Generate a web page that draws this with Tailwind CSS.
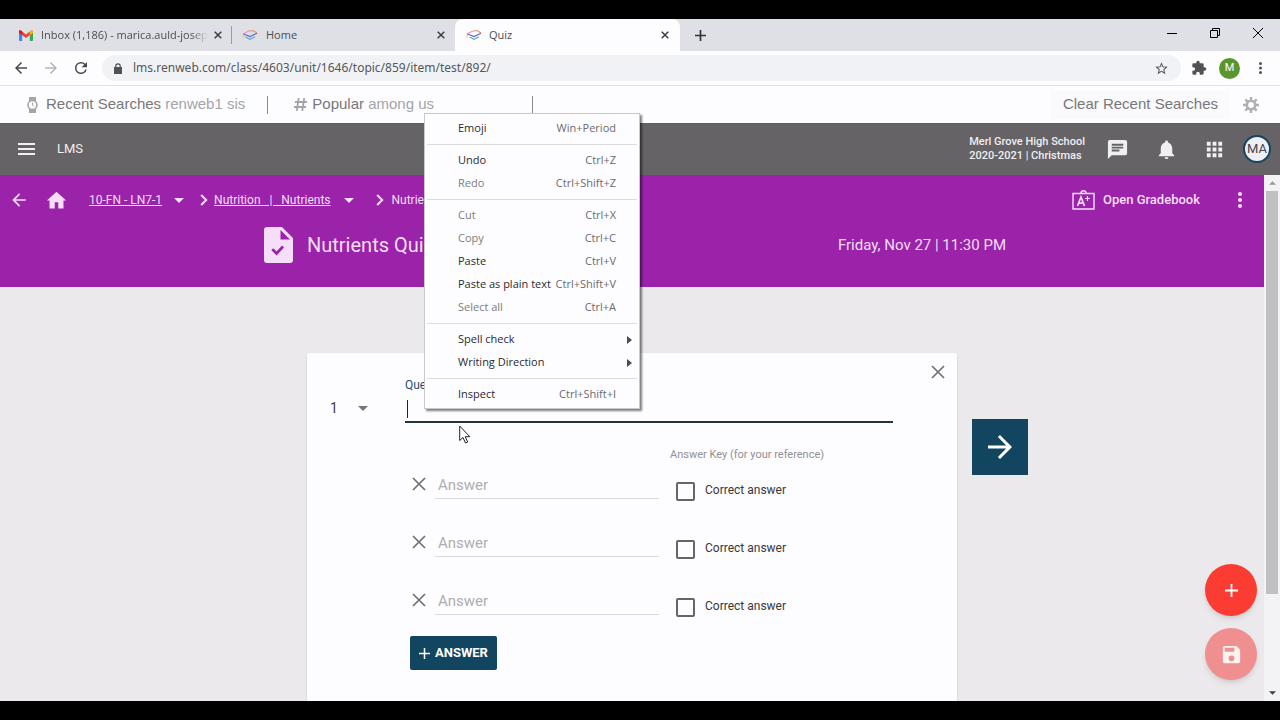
<!DOCTYPE html>
<html lang="en">
<head>
  <meta charset="UTF-8" />
  <meta name="viewport" content="width=device-width, initial-scale=1.0" />
  <title>Quiz</title>
  <script src="https://cdn.jsdelivr.net/npm/@tailwindcss/browser@4"></script>
</head>
<body class="relative flex h-screen flex-col overflow-hidden bg-black py-[19px] font-['Roboto',sans-serif]">

  <!-- shared icons -->
  <svg class="hidden">
    <symbol id="close" viewBox="0 0 14 14"><path d="M1 1l12 12M13 1L1 13" fill="none" stroke="currentColor" stroke-width="1.7" /></symbol>
    <symbol id="tab-close" viewBox="0 0 8 8"><path d="M.7.7l6.6 6.6M7.3.7L.7 7.3" fill="none" stroke="currentColor" stroke-width="1.5" /></symbol>
    <symbol id="caret" viewBox="0 0 10 5"><path d="M0 0h10L5 5z" fill="currentColor" /></symbol>
    <symbol id="chevron" viewBox="0 0 8 12"><path d="M1.2 1l5 5-5 5" fill="none" stroke="currentColor" stroke-width="2" /></symbol>
    <symbol id="arrow" viewBox="0 0 24 24"><path d="M20 11H7.83l5.59-5.59L12 4l-8 8 8 8 1.41-1.41L7.83 13H20z" fill="currentColor" /></symbol>
    <symbol id="dots" viewBox="0 0 4 16"><circle cx="2" cy="2" r="2" fill="currentColor" /><circle cx="2" cy="8" r="2" fill="currentColor" /><circle cx="2" cy="14" r="2" fill="currentColor" /></symbol>
    <symbol id="layers" viewBox="0 0 16 12">
      <path d="M1.2 5v4" fill="none" stroke="#f2cf52" stroke-width="1.2" />
      <path d="M3.500 8l4.500 2.300 5-2.500" fill="none" stroke="#5fa8dc" stroke-width="1.2" />
      <path d="M1 4.800L7 2" fill="none" stroke="#e79bb4" stroke-width="1.2" />
      <path d="M7 2l4-.5 4 2.500" fill="none" stroke="#e8926a" stroke-width="1.2" />
      <path d="M1.500 5L8 7.500l7-3.300" fill="none" stroke="#6c62cc" stroke-width="1.2" />
    </symbol>
  </svg>

  <!-- tab strip -->
  <div class="flex h-8 shrink-0 items-stretch bg-[#dee0e5] font-['Open_Sans',sans-serif] text-[11px] text-[#4b4d52]">
    <div class="flex w-[231px] items-center pr-[9px] pl-[19px]">
      <svg class="h-[11px] w-[14px] shrink-0" viewBox="0 0 14 11">
        <path d="M0 1.5V10q0 1 1 1h2.2V4z" fill="#4285f4" />
        <path d="M14 1.5V10q0 1-1 1h-2.2V4z" fill="#34a853" />
        <path d="M0 1.6Q0 0 1.6.3L7 4.4 12.4.3Q14 0 14 1.6V2.8L7 8 0 2.8z" fill="#ea4335" />
        <path d="M10.8 1.5l1.6-1.2Q14 0 14 1.6V2.8l-3.2 2.4z" fill="#fbbc04" />
        <path d="M0 1.6Q0 0 1.6.3l1.6 1.2v3.7L0 2.8z" fill="#c5221f" />
      </svg>
      <span class="ml-2 mask-r-from-90% whitespace-nowrap">Inbox (1,186) - marica.auld-josep</span>
      <button aria-label="Close tab" class="ml-auto"><svg class="size-2 text-[#3c3e43]"><use href="#tab-close" /></svg></button>
    </div>
    <span class="my-[7px] w-px bg-[#9b9da2]"></span>
    <div class="flex w-[223px] items-center pr-[10px] pl-[10px]">
      <svg class="h-3 w-4"><use href="#layers" /></svg>
      <span class="ml-2">Home</span>
      <button aria-label="Close tab" class="ml-auto"><svg class="size-2 text-[#3c3e43]"><use href="#tab-close" /></svg></button>
    </div>
    <div class="flex w-[225px] items-center rounded-t-lg bg-[#fdfcfe] pr-[11px] pl-[11px]">
      <svg class="h-3 w-4"><use href="#layers" /></svg>
      <span class="ml-[7px]">Quiz</span>
      <button aria-label="Close tab" class="ml-auto"><svg class="size-2 text-[#3c3e43]"><use href="#tab-close" /></svg></button>
    </div>
    <button aria-label="New tab" class="ml-[15px]"><svg class="size-[11px] text-[#303236]" viewBox="0 0 11 11"><path d="M5.5 0v11M0 5.5h11" stroke="currentColor" stroke-width="1.7" /></svg></button>
    <div class="mb-1 ml-auto flex items-center gap-[33px] pr-[17px] text-black">
      <button aria-label="Minimize"><svg class="size-[10px]" viewBox="0 0 10 10"><path d="M0 5.5h10" stroke="currentColor" /></svg></button>
      <button aria-label="Restore"><svg class="size-[10px]" viewBox="0 0 10 10"><path d="M.5 2.5h7v7h-7zM2.5 2.5v-2h7v7h-2" fill="none" stroke="currentColor" /></svg></button>
      <button aria-label="Close window"><svg class="size-[10px]" viewBox="0 0 10 10"><path d="M0 0l10 10M10 0L0 10" stroke="currentColor" /></svg></button>
    </div>
  </div>

  <!-- address bar -->
  <div class="flex h-[35px] shrink-0 items-center border-b border-[#e2e2e5] bg-[#fdfcfe] pr-[18px] pl-3 text-[#505256]">
    <button aria-label="Back"><svg class="size-[18px] text-[#47494d]"><use href="#arrow" /></svg></button>
    <button aria-label="Forward" class="ml-3"><svg class="size-[18px] rotate-180 text-[#b5b6b9]"><use href="#arrow" /></svg></button>
    <button aria-label="Reload" class="ml-3"><svg class="size-[18px] text-[#47494d]" viewBox="0 0 24 24"><path fill="currentColor" d="M17.65 6.35A7.96 7.96 0 0 0 12 4a8 8 0 1 0 7.73 10h-2.08A6 6 0 1 1 12 6c1.66 0 3.14.69 4.22 1.78L13 11h7V4z" /></svg></button>
    <div class="ml-3 flex h-[26px] grow items-center rounded-full bg-[#f1f2f5] pr-3 pl-3">
      <svg class="h-[11px] w-2" viewBox="0 0 8 11"><path d="M0 4h8v7H0z" fill="currentColor" /><path d="M1.8 4.5V3a2.2 2.2 0 0 1 4.4 0v1.5" fill="none" stroke="currentColor" stroke-width="1.2" /></svg>
      <input type="text" aria-label="Address" value="lms.renweb.com/class/4603/unit/1646/topic/859/item/test/892/" class="ml-[11px] grow bg-transparent font-['Noto_Sans',sans-serif] text-xs text-[#55575b] outline-none" />
      <button aria-label="Bookmark"><svg class="size-[15px]" viewBox="0 0 24 24"><path fill="currentColor" d="M22 9.24l-7.19-.62L12 2 9.19 8.63 2 9.24l5.46 4.73L5.82 21 12 17.27 18.18 21l-1.63-7.03zM12 15.4l-3.76 2.27 1-4.28-3.32-2.88 4.38-.38L12 6.1l1.71 4.04 4.38.38-3.32 2.88 1 4.28z" /></svg></button>
    </div>
    <button aria-label="Extensions" class="ml-[10px]"><svg class="size-4" viewBox="0 0 24 24"><path fill="currentColor" d="M20.5 11H19V7a2 2 0 0 0-2-2h-4V3.500a2.500 2.500 0 0 0-5 0V5H4a2 2 0 0 0-2 2v3.800h1.500a2.700 2.700 0 0 1 0 5.400H2V20a2 2 0 0 0 2 2h3.800v-1.500a2.700 2.700 0 0 1 5.400 0V22H17a2 2 0 0 0 2-2v-4h1.500a2.500 2.500 0 0 0 0-5z" /></svg></button>
    <button class="ml-3 size-[21px] rounded-full bg-[#5a962d] text-[11px] text-white">M</button>
    <button aria-label="Browser menu" class="ml-[19px]"><svg class="h-3 w-[3px]"><use href="#dots" /></svg></button>
  </div>

  <!-- recent searches -->
  <div class="flex h-[37px] shrink-0 items-center bg-[#fdfcfe] pr-[21px] pl-[27px] font-['Liberation_Sans',sans-serif] text-[15px] text-[#a5a5a8]">
    <svg class="h-4 w-[11px]" viewBox="0 0 11 16"><path d="M2 0h7v4.500H2zM2 11.500h7V16H2z" fill="currentColor" /><circle cx="5.500" cy="8" r="4.500" fill="#fdfcfe" stroke="currentColor" stroke-width="1.600" /><path d="M5.500 5.500V8l1.500 1.500" fill="none" stroke="currentColor" /></svg>
    <p class="ml-2"><span class="text-[#78787b]">Recent Searches</span> renweb1 sis</p>
    <span class="ml-[22px] h-[18px] w-px bg-[#8b8b8e]"></span>
    <svg class="ml-[26px] size-[13px]" viewBox="0 0 13 13"><path d="M4.700 0L2.800 13M10.200 0L8.300 13M1 4h12M0 9h12" stroke="currentColor" stroke-width="1.800" /></svg>
    <p class="ml-[5px]"><span class="text-[#78787b]">Popular</span> among us</p>
    <span class="ml-[98px] h-[18px] w-px bg-[#8b8b8e]"></span>
    <button class="ml-auto h-7 bg-[#faf9fb] px-3 text-[#78787b]">Clear Recent Searches</button>
    <button aria-label="Settings" class="ml-[13px]"><svg class="size-4" viewBox="0 0 16 16"><circle cx="8" cy="8" r="4.200" fill="none" stroke="#b0b0b3" stroke-width="2.600" /><path d="M8 0v3.500M8 12.500V16M0 8h3.500M12.500 8H16M2.300 2.300l2.500 2.500M11.200 11.200l2.500 2.500M2.300 13.700l2.500-2.500M11.200 4.800l2.500-2.500" stroke="#b0b0b3" stroke-width="2.400" /></svg></button>
  </div>

  <!-- app header -->
  <header class="flex h-[52px] shrink-0 items-center bg-[#656365] pr-[9px] pl-[18px] text-[#f0eff1] inset-shadow-xs">
    <button aria-label="Menu"><svg class="h-3 w-[17px]" viewBox="0 0 17 12"><path d="M0 1h17M0 6h17M0 11h17" stroke="currentColor" stroke-width="2" /></svg></button>
    <span class="ml-[22px] text-[13px]">LMS</span>
    <p class="ml-auto text-[11px] leading-[14px] font-medium">Merl Grove High School<br />2020-2021 | Christmas</p>
    <button aria-label="Messages" class="ml-[21px]"><svg class="size-[23px]" viewBox="0 0 24 24"><path fill="currentColor" d="M20 2H4a2 2 0 0 0-2 2v18l4-4h14a2 2 0 0 0 2-2V4a2 2 0 0 0-2-2zM6 9h12v2H6zm8 5H6v-2h8zm4-6H6V6h12z" /></svg></button>
    <button aria-label="Notifications" class="ml-[26px]"><svg class="size-[23px]" viewBox="0 0 24 24"><path fill="currentColor" d="M12 22a2 2 0 0 0 2-2h-4a2 2 0 0 0 2 2zm6-6v-5c0-3.070-1.640-5.640-4.500-6.320V4a1.500 1.500 0 0 0-3 0v.68C7.630 5.360 6 7.920 6 11v5l-2 2v1h16v-1z" /></svg></button>
    <button aria-label="Apps" class="ml-[25px]"><svg class="size-[23px]" viewBox="0 0 24 24"><path fill="currentColor" d="M4 8h4V4H4zm6 12h4v-4h-4zm-6 0h4v-4H4zm0-6h4v-4H4zm6 0h4v-4h-4zm6-10v4h4V4zm-6 4h4V4h-4zm6 6h4v-4h-4zm0 6h4v-4h-4z" /></svg></button>
    <button class="ml-[17px] size-7 rounded-full border-2 border-[#16455f] bg-[#efeef3] text-[13px] text-[#44454b]">MA</button>
  </header>

  <div class="flex min-h-0 grow">
    <main class="relative min-w-0 grow overflow-hidden bg-[#ebe9eb]">
      <div class="h-28 bg-[#9a23aa] text-[#f6def8]">
        <nav class="flex h-[50px] items-center pr-[22px] pl-[9px] text-xs whitespace-nowrap">
          <button aria-label="Back"><svg class="size-5"><use href="#arrow" /></svg></button>
          <a href="#" aria-label="Home" class="ml-[17px]"><svg class="size-[21px]" viewBox="0 0 24 24"><path fill="currentColor" d="M10 21v-7h4v7h6v-9h3L12 2 1 12h3v9z" /></svg></a>
          <a href="#" class="ml-[22px] underline">10-FN - LN7-1</a>
          <button aria-label="Choose class" class="ml-3"><svg class="h-[5px] w-[10px]"><use href="#caret" /></svg></button>
          <svg class="ml-4 h-3 w-2"><use href="#chevron" /></svg>
          <a href="#" class="ml-[6px] whitespace-pre underline">Nutrition   |   Nutrients</a>
          <button aria-label="Choose topic" class="ml-[13px]"><svg class="h-[5px] w-[10px]"><use href="#caret" /></svg></button>
          <svg class="ml-[22px] h-3 w-2"><use href="#chevron" /></svg>
          <span class="ml-2">Nutrients Quiz</span>
          <a href="#" class="ml-auto flex items-center text-[13px] font-medium">
            <svg class="mr-2 h-5 w-[23px]" viewBox="0 0 23 20"><path d="M1 3.500h21v15.500H1zM9 3a2.500 2.200 0 0 1 5 0" fill="none" stroke="currentColor" stroke-width="1.400" /><path d="M5.500 16L9 7l3.500 9M6.700 13.200h4.600" fill="none" stroke="currentColor" stroke-width="1.700" /><path d="M15.500 6v5M13 8.500h5" stroke="currentColor" stroke-width="1.200" /></svg>
            Open Gradebook
          </a>
          <button aria-label="More" class="ml-[38px]"><svg class="h-4 w-1"><use href="#dots" /></svg></button>
        </nav>
        <div class="mx-auto flex h-10 max-w-[748px] items-center pl-[6px]">
          <svg class="h-9 w-[29px]" viewBox="0 0 29 36"><path fill="currentColor" fill-rule="evenodd" d="M3 0h15l11 11v22a3 3 0 0 1-3 3H3a3 3 0 0 1-3-3V3a3 3 0 0 1 3-3zm13.500 3v9.500H26zM7.300 23l5.200 5.500 7.500-8-2-2-5.500 6-3.200-3.300z" /></svg>
          <h1 class="ml-[14px] text-xl">Nutrients Quiz</h1>
          <p class="ml-auto text-[15px]">Friday, Nov 27 | 11:30 PM</p>
        </div>
      </div>

      <div class="grid grid-cols-[1fr_650px_1fr] pt-[66px]">
        <div></div>
        <section class="h-[400px] rounded-xs bg-[#fdfcfe] shadow">
          <div class="flex pt-[11px] pl-[23px]">
            <div class="relative mt-9 h-4 w-[75px]">
              <select aria-label="Points" class="block w-10 appearance-none text-sm leading-4 text-[#3f3f42]"><option>1</option></select>
              <svg class="pointer-events-none absolute top-[6px] left-7 h-[5px] w-[10px] text-[#77777a]"><use href="#caret" /></svg>
            </div>
            <div class="relative mt-[13px] w-[488px]">
              <label for="question" class="block text-xs leading-4 text-[#2b5069]">Question</label>
              <input id="question" type="text" class="block h-[30px] w-full border-b-2 border-[#1f3542] outline-none" />
              <span class="absolute top-[23px] left-[2px] h-[18px] w-px bg-[#222]"></span>
            </div>
            <button aria-label="Delete question" class="ml-[38px] h-4 text-[#717174]"><svg class="size-[14px]"><use href="#close" /></svg></button>
          </div>

          <div class="mt-[24px] pl-[363px] text-[11px] leading-4 text-[#919194]">Answer Key (for your reference)</div>

          <div class="flex flex-col gap-[30px] pt-2 pl-[105px]">
            <div class="flex h-7 items-start">
              <button aria-label="Remove answer 1" class="mt-[6px] text-[#717174]"><svg class="size-[14px]"><use href="#close" /></svg></button>
              <input type="text" aria-label="Answer 1" placeholder="Answer" class="ml-[9px] h-7 w-56 border-b border-[#dadadd] px-[3px] pt-px text-[15px] text-[#444] outline-none placeholder:text-[#aeaeb1]" />
              <input id="correct1" type="checkbox" class="mt-[11px] ml-[17px] size-[19px] appearance-none rounded-xs border-2 border-[#666669] checked:bg-[#12455f]" />
              <label for="correct1" class="mt-[11px] ml-[10px] text-xs leading-4 text-[#38383b]">Correct answer</label>
            </div>
            <div class="flex h-7 items-start">
              <button aria-label="Remove answer 2" class="mt-[6px] text-[#717174]"><svg class="size-[14px]"><use href="#close" /></svg></button>
              <input type="text" aria-label="Answer 2" placeholder="Answer" class="ml-[9px] h-7 w-56 border-b border-[#dadadd] px-[3px] pt-px text-[15px] text-[#444] outline-none placeholder:text-[#aeaeb1]" />
              <input id="correct2" type="checkbox" class="mt-[11px] ml-[17px] size-[19px] appearance-none rounded-xs border-2 border-[#666669] checked:bg-[#12455f]" />
              <label for="correct2" class="mt-[11px] ml-[10px] text-xs leading-4 text-[#38383b]">Correct answer</label>
            </div>
            <div class="flex h-7 items-start">
              <button aria-label="Remove answer 3" class="mt-[6px] text-[#717174]"><svg class="size-[14px]"><use href="#close" /></svg></button>
              <input type="text" aria-label="Answer 3" placeholder="Answer" class="ml-[9px] h-7 w-56 border-b border-[#dadadd] px-[3px] pt-px text-[15px] text-[#444] outline-none placeholder:text-[#aeaeb1]" />
              <input id="correct3" type="checkbox" class="mt-[11px] ml-[17px] size-[19px] appearance-none rounded-xs border-2 border-[#666669] checked:bg-[#12455f]" />
              <label for="correct3" class="mt-[11px] ml-[10px] text-xs leading-4 text-[#38383b]">Correct answer</label>
            </div>
          </div>

          <button class="mt-[21px] ml-[103px] flex h-[34px] items-center gap-[5px] rounded-xs bg-[#12455f] px-[9px] text-[13px] font-bold text-white">
            <svg class="size-[11px]" viewBox="0 0 11 11"><path d="M5.500 0v11M0 5.500h11" stroke="currentColor" stroke-width="1.500" /></svg>
            ANSWER
          </button>
        </section>
        <div class="pt-[66px] pl-[15px]">
          <button aria-label="Next" class="flex size-14 items-center justify-center bg-[#12455f] text-white"><svg class="size-9 rotate-180"><use href="#arrow" /></svg></button>
        </div>
      </div>

      <!-- floating actions -->
      <div class="absolute right-[7px] bottom-[21px] flex flex-col gap-3">
        <button aria-label="Add" class="flex size-[52px] items-center justify-center rounded-full bg-[#fb3c33] text-white shadow-md"><svg class="size-[13px]" viewBox="0 0 13 13"><path d="M6.500 0v13M0 6.500h13" stroke="currentColor" stroke-width="1.800" /></svg></button>
        <button aria-label="Save" class="flex size-[52px] items-center justify-center rounded-full bg-[#f08f8f] text-[#fff3ee] shadow-md"><svg class="size-[23px]" viewBox="0 0 24 24"><path fill="currentColor" d="M17 3H5a2 2 0 0 0-2 2v14a2 2 0 0 0 2 2h14a2 2 0 0 0 2-2V7zm-5 16a3 3 0 1 1 0-6 3 3 0 0 1 0 6zm3-10H5V5h10z" /></svg></button>
      </div>
    </main>

    <!-- scrollbar -->
    <div class="flex w-4 shrink-0 flex-col items-center bg-[#f3f2f4] pb-[6px]">
      <svg class="my-[6px] h-1 w-[7px] shrink-0 rotate-180 text-[#99999b]" viewBox="0 0 10 5"><path d="M0 0h10L5 5z" fill="currentColor" /></svg>
      <div class="h-[403px] w-3 bg-[#c0bfc1]"></div>
      <svg class="mt-auto h-1 w-[7px] shrink-0 text-[#3f3f42]"><use href="#caret" /></svg>
    </div>
  </div>

  <!-- context menu -->
  <div role="menu" class="absolute top-[113px] left-[424px] flex w-[216px] flex-col border border-[#c9c8cb] bg-[#fdfcfe] pt-[3px] pb-[2px] font-['Open_Sans',sans-serif] text-[11px] text-[#2b2b30] shadow-[2px_2px_2px_rgba(0,0,0,0.5)]">
    <button role="menuitem" class="flex h-[23px] items-center justify-between pr-[23px] pl-[33px]"><span>Emoji</span><span class="text-[#6b6b70]">Win+Period</span></button>
    <hr class="mx-[2px] my-1 border-[#dcdbde]" />
    <button role="menuitem" class="flex h-[23px] items-center justify-between pr-[23px] pl-[33px]"><span>Undo</span><span class="text-[#6b6b70]">Ctrl+Z</span></button>
    <button role="menuitem" class="flex h-[23px] items-center justify-between pr-[23px] pl-[33px] text-[#7d7d82]"><span>Redo</span><span class="text-[#6b6b70]">Ctrl+Shift+Z</span></button>
    <hr class="mx-[2px] my-1 border-[#dcdbde]" />
    <button role="menuitem" class="flex h-[23px] items-center justify-between pr-[23px] pl-[33px] text-[#7d7d82]"><span>Cut</span><span class="text-[#6b6b70]">Ctrl+X</span></button>
    <button role="menuitem" class="flex h-[23px] items-center justify-between pr-[23px] pl-[33px] text-[#7d7d82]"><span>Copy</span><span class="text-[#6b6b70]">Ctrl+C</span></button>
    <button role="menuitem" class="flex h-[23px] items-center justify-between pr-[23px] pl-[33px]"><span>Paste</span><span class="text-[#6b6b70]">Ctrl+V</span></button>
    <button role="menuitem" class="flex h-[23px] items-center justify-between pr-[23px] pl-[33px] whitespace-nowrap"><span>Paste as plain text</span><span class="text-[#6b6b70]">Ctrl+Shift+V</span></button>
    <button role="menuitem" class="flex h-[23px] items-center justify-between pr-[23px] pl-[33px] text-[#7d7d82]"><span>Select all</span><span class="text-[#6b6b70]">Ctrl+A</span></button>
    <hr class="mx-[2px] my-1 border-[#dcdbde]" />
    <button role="menuitem" class="flex h-[23px] items-center justify-between pr-[7px] pl-[33px]"><span>Spell check</span><svg class="h-2 w-[5px]" viewBox="0 0 5 8"><path d="M0 0l5 4-5 4z" fill="#4c4c50" /></svg></button>
    <button role="menuitem" class="flex h-[23px] items-center justify-between pr-[7px] pl-[33px]"><span>Writing Direction</span><svg class="h-2 w-[5px]" viewBox="0 0 5 8"><path d="M0 0l5 4-5 4z" fill="#4c4c50" /></svg></button>
    <hr class="mx-[2px] my-1 border-[#dcdbde]" />
    <button role="menuitem" class="flex h-[23px] items-center justify-between pr-[23px] pl-[33px]"><span>Inspect</span><span class="text-[#6b6b70]">Ctrl+Shift+I</span></button>
  </div>

  <!-- mouse pointer -->
  <svg class="absolute top-[425px] left-[459px] h-[19px] w-3" viewBox="0 0 12 19"><path d="M.7 1v14.500l3.300-3 2.500 5.500 2.200-1-2.500-5.300h4.600z" fill="#fff" stroke="#222" /></svg>
</body>
</html>
